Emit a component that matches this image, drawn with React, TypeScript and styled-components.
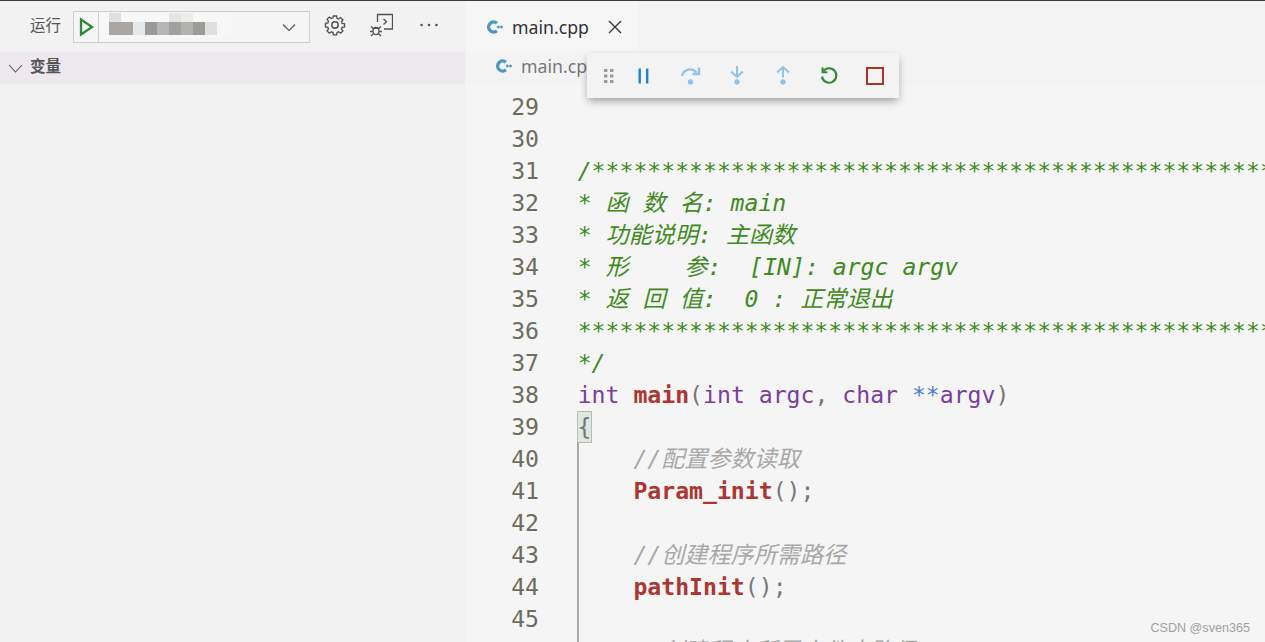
import React from "react";
import styled, { createGlobalStyle } from "styled-components";

const GlobalStyle = createGlobalStyle`
  html, body {
    margin: 0;
    padding: 0;
    height: 100%;
    overflow: hidden;
    background: #f3f3f3;
  }
`;

const uiFont = `"Noto Sans", "Noto Sans CJK SC", sans-serif`;
const monoFont = `"DejaVu Sans Mono", "Noto Sans CJK SC", monospace`;

const Window = styled.div`
  width: 1265px;
  height: 642px;
  display: flex;
  overflow: hidden;
  border-top: 1px solid #3c3c3c;
  box-sizing: border-box;
  font-family: ${uiFont};
  position: relative;
`;

const Sidebar = styled.aside`
  width: 466px;
  flex: none;
  background: #f2f2f2;
`;

const RunBar = styled.div`
  height: 51px;
  display: flex;
  align-items: center;
  padding-left: 30px;
  box-sizing: border-box;
`;

const RunLabel = styled.span`
  width: 43px;
  padding-bottom: 5px;
  font-size: 15.5px;
  color: #555;
`;

const RunSelect = styled.div`
  width: 237px;
  height: 32px;
  box-sizing: border-box;
  border: 1px solid #cecece;
  background: #f5f5f5;
  display: flex;
  align-items: center;
`;

const StartButton = styled.div`
  width: 25px;
  height: 100%;
  box-sizing: border-box;
  border-right: 1px solid #cecece;
  display: flex;
  align-items: center;
  justify-content: center;
`;

const ConfigName = styled.div`
  width: 133px;
  height: 25px;
  margin-right: auto;
  align-self: flex-start;
  margin-top: 1px;
  padding-left: 10px;
  box-sizing: border-box;
  background: #f7f7f7;
  border-radius: 0 10px 10px 0;
`;

const MosaicRow = styled.div<{ $height: number }>`
  display: flex;
  height: ${(p) => p.$height}px;
`;

const Mosaic = styled.span<{ $color: string }>`
  width: 12px;
  background: ${(p) => p.$color};
`;

const SelectArrow = styled.svg`
  margin-right: 12px;
`;

const BarIcon = styled.svg<{ $left: number }>`
  margin-left: ${(p) => p.$left}px;
  margin-bottom: 4px;
  flex: none;
`;

const SectionHeader = styled.div`
  height: 32px;
  display: flex;
  align-items: center;
  gap: 6px;
  padding-left: 8px;
  background: #ece8ee;
  font-size: 15.5px;
  font-weight: 700;
  color: #555;
  margin-right: 1px;
`;

const SectionTitle = styled.span`
  padding-bottom: 5px;
`;

const Main = styled.main`
  flex: 1;
  min-width: 0;
  background: #f5f5f5;
  position: relative;
`;

const TabBar = styled.div`
  height: 51px;
  background: #f3f3f3;
  display: flex;
`;

const Tab = styled.div`
  width: 172px;
  display: flex;
  align-items: center;
  padding-left: 21px;
  box-sizing: border-box;
  background: #f6f6f6;
  font-size: 17.7px;
  color: #333;
`;

const TabName = styled.span`
  margin-left: 9px;
`;

const CloseIcon = styled.svg`
  margin-left: 18px;
`;

const Breadcrumbs = styled.div`
  height: 32px;
  display: flex;
  align-items: center;
  padding: 0 0 4px 30px;
  box-sizing: border-box;
  background: #f3f3f3;
  font-size: 17.7px;
  color: #777;
`;

const Editor = styled.div`
  padding-top: 7px;
  font-family: ${monoFont};
  font-size: 23.14px;
`;

const Line = styled.div`
  height: 32px;
  display: flex;
  line-height: 32px;
  white-space: pre;
`;

const LineNumber = styled.span`
  width: 73px;
  flex: none;
  text-align: right;
  color: #6d6d5d;
`;

const Code = styled.span<{ $guide?: boolean }>`
  margin-left: 38px;
  padding-left: 0.7px;
  flex: 1;
  min-width: 0;
  overflow: hidden;
  box-shadow: ${(p) => (p.$guide ? "inset 2px 0 0 #aaaaaa" : "none")};
`;

const Comment = styled.span`
  color: #3f8a22;
  font-style: italic;
`;

const GreyComment = styled.span`
  color: #a8a8a8;
  font-style: italic;
`;

const Keyword = styled.span`
  color: #7a3e9d;
`;

const Func = styled.span`
  color: #aa3731;
  font-weight: 700;
`;

const Punct = styled.span`
  color: #777777;
`;

const Operator = styled.span`
  color: #4a7fd6;
`;

const Bracket = styled.span`
  display: inline-block;
  width: 15px;
  height: 32px;
  margin-left: -0.7px;
  box-sizing: border-box;
  text-align: center;
  background: #dfe8df;
  outline: 1px solid #b9b9b9;
  outline-offset: -1px;
  color: #777777;
`;

const DebugBar = styled.div`
  position: absolute;
  left: 121px;
  top: 52px;
  width: 312px;
  height: 45px;
  display: flex;
  align-items: center;
  background: #f3f3f3;
  box-shadow: 0 4px 8px -1px rgba(0, 0, 0, 0.35);
`;

const DebugIcon = styled.svg<{ $left: number }>`
  margin-left: ${(p) => p.$left}px;
  flex: none;
`;

const Watermark = styled.div`
  position: absolute;
  right: 15px;
  bottom: 7px;
  font-family: "Liberation Sans", sans-serif;
  font-size: 12.6px;
  color: #a0a0a0;
`;

const mosaicTop = ["#e0e0e0", "#f7f7f7", "#f7f7f7", "#f7f7f7", "#f7f7f7", "#e5e5e5", "#ebebeb"];
const mosaicMain = ["#aaa6a2", "#aaa6a2", "#e3e8ed", "#9c9a98", "#b8b6b5", "#a0a09e", "#b3b1ae", "#9d9a97", "#dde0e2"];

const stars = "*".repeat(80);

const CppIcon = () => (
  <svg width="16" height="16" viewBox="0 0 16 16" fill="none" stroke="#519aba">
    <path d="M9.9 4.2A5 5 0 1 0 9.9 11.800" strokeWidth="3.400" />
    <path d="M9.800 8h3M11.300 6.500v3M13 8h3M14.500 6.500v3" strokeWidth="1.300" />
  </svg>
);

const codeLines: { n: number; body?: React.ReactNode; guide?: boolean }[] = [
  { n: 29 },
  { n: 30 },
  { n: 31, body: <Comment>{"/" + stars}</Comment> },
  { n: 32, body: <Comment>* 函 数 名: main</Comment> },
  { n: 33, body: <Comment>* 功能说明: 主函数</Comment> },
  { n: 34, body: <Comment>* 形    参:  [IN]: argc argv</Comment> },
  { n: 35, body: <Comment>* 返 回 值:  0 : 正常退出</Comment> },
  { n: 36, body: <Comment>{stars}</Comment> },
  { n: 37, body: <Comment>*/</Comment> },
  {
    n: 38,
    body: (
      <>
        <Keyword>int </Keyword>
        <Func>main</Func>
        <Punct>(</Punct>
        <Keyword>int argc</Keyword>
        <Punct>, </Punct>
        <Keyword>char </Keyword>
        <Operator>**</Operator>
        <Keyword>argv</Keyword>
        <Punct>)</Punct>
      </>
    ),
  },
  { n: 39, body: <Bracket>{"{"}</Bracket> },
  { n: 40, guide: true, body: <GreyComment>{"    //配置参数读取"}</GreyComment> },
  {
    n: 41,
    guide: true,
    body: (
      <>
        {"    "}
        <Func>Param_init</Func>
        <Punct>();</Punct>
      </>
    ),
  },
  { n: 42, guide: true },
  { n: 43, guide: true, body: <GreyComment>{"    //创建程序所需路径"}</GreyComment> },
  {
    n: 44,
    guide: true,
    body: (
      <>
        {"    "}
        <Func>pathInit</Func>
        <Punct>();</Punct>
      </>
    ),
  },
  { n: 45, guide: true },
  { n: 46, guide: true, body: <GreyComment>{"    //创建程序所需文件夹路径"}</GreyComment> },
];

const App = (): JSX.Element => {
  return (
    <>
      <GlobalStyle />
      <Window>
        <Sidebar>
          <RunBar>
            <RunLabel>运行</RunLabel>
            <RunSelect>
              <StartButton>
                <svg width="18" height="20" viewBox="0 0 18 20" fill="none" stroke="#2e8b3a" strokeWidth="2.3">
                  <path d="M4 2.5v15L15 10z" />
                </svg>
              </StartButton>
              <ConfigName>
                <MosaicRow $height={9}>
                  {mosaicTop.map((c, i) => (
                    <Mosaic key={i} $color={c} />
                  ))}
                </MosaicRow>
                <MosaicRow $height={13}>
                  {mosaicMain.map((c, i) => (
                    <Mosaic key={i} $color={c} />
                  ))}
                </MosaicRow>
              </ConfigName>
              <SelectArrow width="16" height="16" viewBox="0 0 16 16" fill="none" stroke="#555" strokeWidth="1.1">
                <path d="M2 5.5l6 6 6-6" />
              </SelectArrow>
            </RunSelect>
            <BarIcon $left={14} width="22" height="22" viewBox="0 0 22 22" fill="none" stroke="#505050" strokeWidth="1.5">
              <path d="M9.2 1.5h3.6l.5 2.7 1.7.7 2.3-1.6 2.5 2.5-1.6 2.3.7 1.7 2.7.5v3.4l-2.7.5-.7 1.7 1.6 2.3-2.5 2.5-2.3-1.6-1.7.7-.5 2.7H9.2l-.5-2.7-1.7-.7-2.3 1.6-2.5-2.5 1.6-2.3-.7-1.7-2.7-.5V9.7l2.7-.5.7-1.7L2.2 5.2 4.7 2.7 7 4.3l1.7-.7z" transform="translate(1.1 .6) scale(.9)" />
              <circle cx="11" cy="11" r="3.2" />
            </BarIcon>
            <BarIcon $left={23} width="24" height="24" viewBox="0 0 24 24" fill="none" stroke="#505050" strokeWidth="1.3">
              <path d="M8.5 9V1.5h15V16H15" />
              <path d="M14.5 6l3 2.8-3 2.8" />
              <ellipse cx="7" cy="18" rx="3" ry="3.6" />
              <path d="M3.8 15.4h6.4M1 18.5h2.8M10.2 18.5H13M2 13.5l2.2 2M12 13.5l-2.2 2M2 23l2.4-2.4M12 23l-2.4-2.4" />
            </BarIcon>
            <BarIcon $left={27} width="18" height="6" viewBox="0 0 18 6" fill="#505050">
              <circle cx="1.6" cy="3" r="1.3" />
              <circle cx="9" cy="3" r="1.3" />
              <circle cx="16.4" cy="3" r="1.3" />
            </BarIcon>
          </RunBar>
          <SectionHeader>
            <svg width="16" height="16" viewBox="0 0 16 16" fill="none" stroke="#555" strokeWidth="1.1">
              <path d="M1 5l6.500 7L14 5" />
            </svg>
            <SectionTitle>变量</SectionTitle>
          </SectionHeader>
        </Sidebar>
        <Main>
          <TabBar>
            <Tab>
              <CppIcon />
              <TabName>main.cpp</TabName>
              <CloseIcon width="16" height="16" viewBox="0 0 16 16" fill="none" stroke="#333" strokeWidth="1.3">
                <path d="M2 2l12 12M14 2L2 14" />
              </CloseIcon>
            </Tab>
          </TabBar>
          <Breadcrumbs>
            <CppIcon />
            <TabName>main.cpp</TabName>
          </Breadcrumbs>
          <Editor>
            {codeLines.map((l) => (
              <Line key={l.n}>
                <LineNumber>{l.n}</LineNumber>
                <Code $guide={l.guide}>{l.body}</Code>
              </Line>
            ))}
          </Editor>
          <DebugBar>
            <DebugIcon $left={17} width="10" height="14" viewBox="0 0 10 14" fill="#9a9a9a">
              <rect x="0" y="0" width="3.4" height="3" />
              <rect x="6" y="0" width="3.4" height="3" />
              <rect x="0" y="5.5" width="3.4" height="3" />
              <rect x="6" y="5.5" width="3.4" height="3" />
              <rect x="0" y="11" width="3.4" height="3" />
              <rect x="6" y="11" width="3.4" height="3" />
            </DebugIcon>
            <DebugIcon $left={20} width="20" height="20" viewBox="0 0 20 20" fill="#1a85d4">
              <rect x="4.5" y="2.5" width="2.4" height="15" />
              <rect x="12" y="2.5" width="2.4" height="15" />
            </DebugIcon>
            <DebugIcon $left={26.5} width="20" height="20" viewBox="0 0 20 20" fill="#8fc3ec" stroke="#8fc3ec">
              <path d="M1 10a8.300 8.300 0 0 1 14.500-3.500" fill="none" strokeWidth="2.300" />
              <path d="M18 1.500V8h-6.500" fill="none" strokeWidth="2.300" />
              <circle cx="9.500" cy="16" r="2.300" />
            </DebugIcon>
            <DebugIcon $left={26} width="20" height="20" viewBox="0 0 20 20" fill="#8fc3ec" stroke="#8fc3ec">
              <path d="M10 0v10.500M4 5.500L10 11l6-5.500" fill="none" strokeWidth="2" />
              <circle cx="10" cy="16" r="2.300" />
            </DebugIcon>
            <DebugIcon $left={26.5} width="20" height="20" viewBox="0 0 20 20" fill="#8fc3ec" stroke="#8fc3ec">
              <path d="M10 11.500V1M4 6.500L10 1l6 5.500" fill="none" strokeWidth="2" />
              <circle cx="10" cy="16" r="2.300" />
            </DebugIcon>
            <DebugIcon $left={26} width="20" height="20" viewBox="0 0 20 20" fill="none" stroke="#2f8a33" strokeWidth="2.1">
              <path d="M4.500 5A7.200 7.200 0 1 1 3 10.500" />
              <path d="M3.600 1.500V6.200h4.800" />
            </DebugIcon>
            <DebugIcon $left={26} width="20" height="20" viewBox="0 0 20 20" fill="none" stroke="#a83525" strokeWidth="2">
              <rect x="2" y="2" width="16" height="16" />
            </DebugIcon>
          </DebugBar>
          <Watermark>CSDN @sven365</Watermark>
        </Main>
      </Window>
    </>
  );
};

export default App;
